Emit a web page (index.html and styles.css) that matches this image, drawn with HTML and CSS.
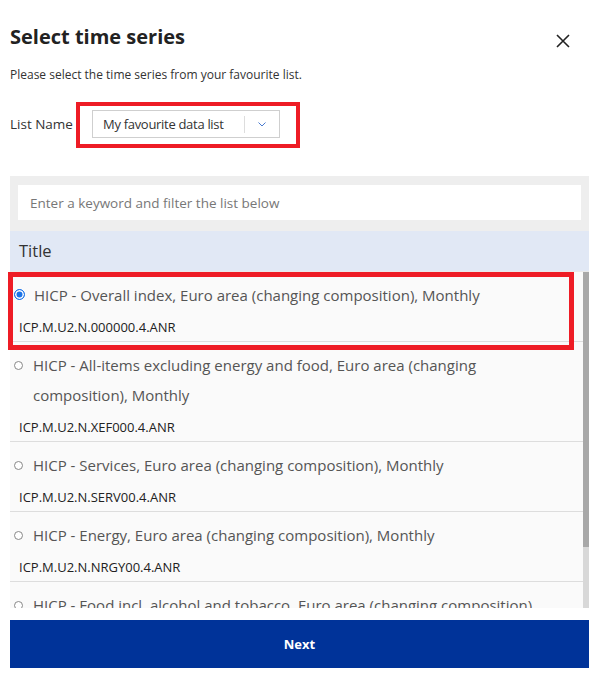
FILE: index.html
```html
<!DOCTYPE html>
<html lang="en">
<head>
    <meta charset="UTF-8">
    <meta name="viewport" content="width=device-width, initial-scale=1.0">
    <title>Select time series</title>
    <link rel="stylesheet" href="styles.css">
</head>
<body>
    <div class="dialog">
        <div class="dialog-head">
            <h1>Select time series</h1>
            <button class="close" aria-label="Close">
                <svg width="14" height="14" viewBox="0 0 14 14"><path d="M1 1L13 13M13 1L1 13" stroke="#222" stroke-width="1.6" fill="none"/></svg>
            </button>
        </div>
        <p class="intro">Please select the time series from your favourite list.</p>
        <div class="list-name">
            <label>List Name</label>
            <span class="select-wrap">
                <span class="select">
                    <span class="select-value">My favourite data list</span>
                    <span class="select-arrow">
                        <svg width="8" height="5" viewBox="0 0 8 5"><path d="M0.5 0.5L4 4L7.5 0.5" stroke="#4a7bd0" stroke-width="1" fill="none"/></svg>
                    </span>
                </span>
                <span class="mark mark-select"></span>
            </span>
        </div>
        <div class="panel">
            <div class="search">
                <input type="text" placeholder="Enter a keyword and filter the list below">
            </div>
            <div class="table-head">Title</div>
            <div class="list">
                <div class="rows">
                    <div class="row">
                        <div class="row-title"><span class="radio checked"></span><span>HICP - Overall index, Euro area (changing composition), Monthly</span></div>
                        <div class="row-code">ICP.M.U2.N.000000.4.ANR</div>
                    </div>
                    <div class="row">
                        <div class="row-title"><span class="radio"></span><span>HICP - All-items excluding energy and food, Euro area (changing composition), Monthly</span></div>
                        <div class="row-code">ICP.M.U2.N.XEF000.4.ANR</div>
                    </div>
                    <div class="row">
                        <div class="row-title"><span class="radio"></span><span>HICP - Services, Euro area (changing composition), Monthly</span></div>
                        <div class="row-code">ICP.M.U2.N.SERV00.4.ANR</div>
                    </div>
                    <div class="row">
                        <div class="row-title"><span class="radio"></span><span>HICP - Energy, Euro area (changing composition), Monthly</span></div>
                        <div class="row-code">ICP.M.U2.N.NRGY00.4.ANR</div>
                    </div>
                    <div class="row">
                        <div class="row-title"><span class="radio"></span><span>HICP - Food incl. alcohol and tobacco, Euro area (changing composition),</span></div>
                    </div>
                </div>
                <div class="scrollbar"><div class="thumb"></div></div>
            </div>
            <span class="mark mark-row"></span>
        </div>
        <button class="next">Next</button>
    </div>
</body>
</html>
```

FILE: styles.css
```css
body {
    margin: 0;
    background: #fff;
    font-family: "Open Sans", Arial, sans-serif;
    color: #222;
}
.dialog {
    padding: 0 6px 0 10px;
}
.dialog-head {
    display: flex;
    align-items: center;
    justify-content: space-between;
    margin-top: 23px;
    height: 28px;
}
.dialog-head h1 {
    margin: 0;
    font-size: 20px;
    line-height: 28px;
    font-weight: 700;
    color: #222;
}
.close {
    border: none;
    background: none;
    padding: 0;
    margin: 8px 19px 0 0;
    width: 14px;
    height: 14px;
    display: flex;
    cursor: pointer;
}
.intro {
    margin: 16px 0 0;
    font-size: 12px;
    line-height: 16px;
    color: #333;
}
.list-name {
    display: flex;
    align-items: center;
    margin-top: 27px;
    height: 28px;
}
.list-name label {
    font-size: 13.5px;
    color: #333;
    width: 82px;
}
.select-wrap {
    position: relative;
    display: flex;
}
.select {
    display: flex;
    align-items: center;
    width: 186px;
    height: 26px;
    border: 1px solid #cfcfcf;
    background: #fff;
}
.select-value {
    flex: 1;
    padding-left: 10px;
    font-size: 13px;
    letter-spacing: -0.3px;
    color: #333;
}
.select-arrow {
    width: 34px;
    height: 17px;
    border-left: 1px solid #ddd;
    display: flex;
    align-items: center;
    justify-content: center;
}
.mark {
    position: absolute;
    border: 4px solid #ee1c25;
    box-sizing: border-box;
}
.mark-select {
    left: -16px;
    top: -8px;
    width: 224px;
    height: 46px;
}
.panel {
    position: relative;
    margin-top: 38px;
    background: #eee;
}
.search {
    padding: 9px 8px 11px;
}
.search input {
    display: block;
    box-sizing: border-box;
    width: 100%;
    height: 35px;
    border: none;
    padding: 0 12px;
    font-family: inherit;
    font-size: 13.5px;
    background: #fff;
}
.search input::placeholder {
    color: #777;
}
.table-head {
    height: 40px;
    line-height: 40px;
    padding-left: 9px;
    font-size: 16.5px;
    color: #333;
    background: #e1e8f5;
    border-bottom: 1px solid #e9e9e9;
}
.list {
    display: flex;
    height: 336px;
    overflow: hidden;
}
.rows {
    flex: 1;
    background: #fafafa;
}
.row {
    padding: 8px 20px 4px 4px;
    border-bottom: 1px solid #ddd;
}
.row-title {
    display: flex;
    gap: 9px;
    font-size: 15px;
    line-height: 30px;
    color: #555;
}
.radio {
    flex: none;
    box-sizing: border-box;
    width: 9px;
    height: 9px;
    margin: 11px 1px 0 0;
    border: 1px solid #888;
    border-radius: 50%;
    background: #fff;
}
.radio.checked {
    border: 1px solid #1a73e8;
    background: #1a73e8;
    box-shadow: inset 0 0 0 1.5px #fff;
    width: 11px;
    height: 11px;
    margin: 9px 0 0 0;
}
.row-code {
    margin: 7px 0 0 5px;
    font-size: 13px;
    line-height: 20px;
    color: #222;
}
.scrollbar {
    width: 6px;
    background: #d8d8d8;
}
.thumb {
    height: 275px;
    background: #a8a8a8;
}
.mark-row {
    left: -2px;
    top: 96px;
    width: 566px;
    height: 78px;
    border-width: 5px;
}
.next {
    display: block;
    width: 579px;
    height: 48px;
    margin-top: 12px;
    border: none;
    background: #003399;
    color: #fff;
    font-family: inherit;
    font-size: 13px;
    font-weight: 700;
    cursor: pointer;
}
```
